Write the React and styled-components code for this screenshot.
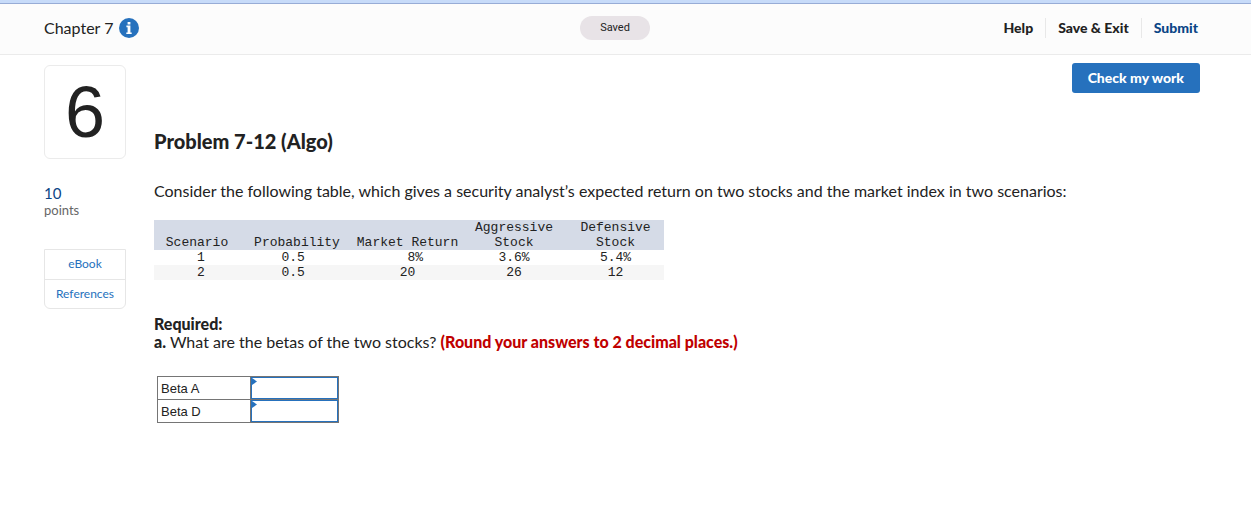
import React, { useState } from "react";
import styled, { createGlobalStyle } from "styled-components";

const GlobalStyle = createGlobalStyle`
  * {
    box-sizing: border-box;
  }
  body {
    margin: 0;
    background-color: #ffffff;
    color: #222222;
    font-family: Lato, "Liberation Sans", sans-serif;
    font-size: 16px;
    line-height: 18px;
  }
`;

const Header = styled.header`
  display: grid;
  grid-template-columns: 1fr auto 1fr;
  align-items: center;
  height: 55px;
  padding: 0 65px 2px 44px;
  background-color: #fcfcfc;
  border-top: 3px solid #c7dbf9;
  border-bottom: 1px solid #ebebeb;
  box-shadow: inset 0 1px 0 #97acd6;
`;

const Chapter = styled.div`
  display: flex;
  align-items: center;
  gap: 6px;
`;

const InfoButton = styled.button`
  display: flex;
  padding: 0;
  border: none;
  background: none;
  cursor: pointer;
`;

const Saved = styled.div`
  padding: 0 20px;
  border-radius: 12px;
  background-color: #e8e3e7;
  font-family: Roboto, sans-serif;
  font-size: 11px;
  line-height: 24px;
`;

const Nav = styled.nav`
  display: flex;
  justify-content: flex-end;
  margin-right: -24px;
`;

const NavLink = styled.a`
  padding: 0 12px;
  color: ${(props) => (props.$primary ? "#0a4586" : "#222222")};
  font-size: 14px;
  font-weight: 900;
  line-height: 20px;
  text-decoration: none;
  & + & {
    border-left: 1px solid #e8e8e8;
  }
`;

const Content = styled.div`
  display: flex;
  gap: 28px;
  padding: 8px 51px 40px 44px;
`;

const Sidebar = styled.aside`
  flex: none;
  width: 82px;
  padding-top: 2px;
`;

const QuestionNumber = styled.div`
  height: 94px;
  border: 1px solid #ebebeb;
  border-radius: 6px;
  font-family: "Liberation Sans", sans-serif;
  font-size: 72px;
  line-height: 92px;
  text-align: center;
`;

const Points = styled.div`
  margin-top: 25px;
  color: #666666;
  font-size: 13px;
  line-height: 16px;
  strong {
    display: block;
    color: #0a4586;
    font-size: 15px;
    font-weight: 400;
    line-height: 18px;
  }
`;

const Resources = styled.div`
  margin-top: 31px;
  border: 1px solid #e6e6e6;
  border-radius: 0 0 6px 6px;
`;

const ResourceLink = styled.a`
  display: block;
  color: #2671bd;
  font-size: 12px;
  line-height: 28px;
  text-align: center;
  text-decoration: none;
  &:first-child {
    padding-bottom: 1px;
    border-bottom: 1px solid #e6e6e6;
  }
`;

const Main = styled.main`
  display: flex;
  flex: 1;
  flex-direction: column;
  align-items: flex-start;
  min-width: 0;
`;

const CheckButton = styled.button`
  align-self: flex-end;
  height: 30px;
  padding: 0 16px 2px;
  border: none;
  border-radius: 3px;
  background-color: #2671bd;
  color: #ffffff;
  font-family: inherit;
  font-size: 14px;
  font-weight: 900;
  cursor: pointer;
`;

const Title = styled.h1`
  margin: 36px 0 0;
  font-size: 20px;
  font-weight: 900;
  line-height: 24px;
`;

const Text = styled.p`
  margin: 0;
  padding-top: ${(props) => props.$space || 0}px;
  b {
    font-weight: 900;
  }
`;

const Hint = styled.b`
  color: #c00000;
`;

const DataTable = styled.table`
  width: 510px;
  max-width: 100%;
  margin-top: 20px;
  table-layout: fixed;
  border-collapse: collapse;
  font-family: "Liberation Mono", monospace;
  font-size: 13px;
  line-height: 15px;
  text-align: center;
  white-space: pre;
  th,
  td {
    padding: 0;
    font-weight: 400;
  }
  th {
    vertical-align: bottom;
    background-color: #d5dbe7;
  }
  tbody tr:nth-child(even) {
    background-color: #f6f6f6;
  }
`;

const Column = styled.col`
  width: ${(props) => props.$width}px;
`;

const AnswerTable = styled.table`
  margin: 25px 0 0 3px;
  border-collapse: collapse;
  font-family: "Liberation Sans", sans-serif;
  font-size: 13px;
  th,
  td {
    height: 23px;
    padding: 0;
    border: 1px solid #757575;
  }
  th {
    width: 93px;
    padding: 2px 3px 0;
    font-weight: 400;
    text-align: left;
  }
  td {
    width: 88px;
  }
`;

const AnswerField = styled.div`
  position: relative;
  svg {
    position: absolute;
    top: 1px;
    left: 1px;
  }
`;

const AnswerInput = styled.input`
  display: block;
  width: 100%;
  height: 22px;
  padding: 0 8px;
  border: 1px solid #2671bd;
  outline: none;
  background-color: #ffffff;
  font-family: inherit;
  font-size: 13px;
`;

const columns = [
  { label: "Scenario", width: 86 },
  { label: "Probability", width: 114 },
  { label: "Market Return", width: 107 },
  { label: "Aggressive\nStock", width: 106 },
  { label: "Defensive\nStock", width: 97 },
];

const rows = [
  ["\u00a01", "0.5\u00a0", "\u00a0\u00a08%", "3.6%", "5.4%"],
  ["\u00a02", "0.5\u00a0", "20", "26", "12"],
];

const App = () => {
  const [answers, setAnswers] = useState({ A: "", D: "" });
  const onChange = (e) => {
    const { name, value } = e.target;
    setAnswers((prev) => ({ ...prev, [name]: value }));
  };
  return (
    <>
      <GlobalStyle />
      <Header>
        <Chapter>
          <span>Chapter 7</span>
          <InfoButton type="button" aria-label="Chapter info">
            <svg width="20" height="20" viewBox="0 0 20 20">
              <circle cx="10" cy="10" r="10" fill="#2671bd" />
              <path
                fill="#ffffff"
                d="M8.6 4h2.8v2.4H8.6zM7.4 7.6h4v6.8h1.3V16H7.3v-1.6h1.3V9.2H7.4z"
              />
            </svg>
          </InfoButton>
        </Chapter>
        <Saved>Saved</Saved>
        <Nav>
          <NavLink href="#help">Help</NavLink>
          <NavLink href="#exit">Save &amp; Exit</NavLink>
          <NavLink href="#submit" $primary>Submit</NavLink>
        </Nav>
      </Header>
      <Content>
        <Sidebar>
          <QuestionNumber>6</QuestionNumber>
          <Points>
            <strong>10</strong>
            points
          </Points>
          <Resources>
            <ResourceLink href="#ebook">eBook</ResourceLink>
            <ResourceLink href="#references">References</ResourceLink>
          </Resources>
        </Sidebar>
        <Main>
          <CheckButton type="button">Check my work</CheckButton>
          <Title>Problem 7-12 (Algo)</Title>
          <Text $space={29}>
            Consider the following table, which gives a security analyst’s expected return on two
            stocks and the market index in two scenarios:
          </Text>
          <DataTable>
            <colgroup>
              {columns.map((column) => (
                <Column key={column.label} $width={column.width} />
              ))}
            </colgroup>
            <thead>
              <tr>
                {columns.map((column) => (
                  <th key={column.label} scope="col">{column.label}</th>
                ))}
              </tr>
            </thead>
            <tbody>
              {rows.map((row) => (
                <tr key={row[0]}>
                  {row.map((cell, i) => (
                    <td key={i}>{cell}</td>
                  ))}
                </tr>
              ))}
            </tbody>
          </DataTable>
          <Text $space={35}>
            <b>Required:</b>
          </Text>
          <Text>
            <b>a.</b> What are the betas of the two stocks?{" "}
            <Hint>(Round your answers to 2 decimal places.)</Hint>
          </Text>
          <AnswerTable>
            <tbody>
              {Object.keys(answers).map((key) => (
                <tr key={key}>
                  <th scope="row">
                    <label htmlFor={`beta-${key}`}>Beta {key}</label>
                  </th>
                  <td>
                    <AnswerField>
                      <AnswerInput
                        id={`beta-${key}`}
                        name={key}
                        type="text"
                        value={answers[key]}
                        onChange={onChange}
                      />
                      <svg width="5" height="7" viewBox="0 0 5 7">
                        <path fill="#2671bd" d="M0 0l5 3.5L0 7z" />
                      </svg>
                    </AnswerField>
                  </td>
                </tr>
              ))}
            </tbody>
          </AnswerTable>
        </Main>
      </Content>
    </>
  );
};

export default App;
